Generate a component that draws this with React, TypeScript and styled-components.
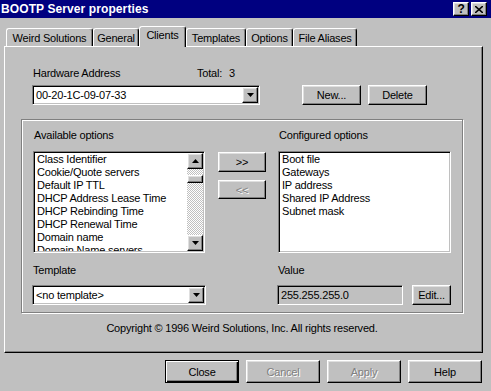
import React from 'react';
import styled, { createGlobalStyle, css } from 'styled-components';

const GlobalStyle = createGlobalStyle`
  html, body {
    margin: 0;
    padding: 0;
    background: #c0c0c0;
  }
  body {
    font-family: "Liberation Sans", Arial, sans-serif;
    font-size: 11px;
  }
  * {
    box-sizing: border-box;
  }
`;

const raised = css`
  border: 1px solid;
  border-color: #fff #000 #000 #fff;
  box-shadow: inset -1px -1px #808080, inset 1px 1px #dfdfdf;
  background: #c0c0c0;
`;

const sunken = css`
  border: 1px solid;
  border-color: #808080 #fff #fff #808080;
  box-shadow: inset 1px 1px #000, inset -1px -1px #c0c0c0;
`;

const available = [
  'Class Identifier',
  'Cookie/Quote servers',
  'Default IP TTL',
  'DHCP Address Lease Time',
  'DHCP Rebinding Time',
  'DHCP Renewal Time',
  'Domain name',
  'Domain Name servers',
];

const configured = ['Boot file', 'Gateways', 'IP address', 'Shared IP Address', 'Subnet mask'];

const tabs = [
  { label: 'Weird Solutions', w: 87 },
  { label: 'General', w: 46 },
  { label: 'Clients', w: 47, active: true },
  { label: 'Templates', w: 60 },
  { label: 'Options', w: 47 },
  { label: 'File Aliases', w: 64 },
];

const Arrow = ({ dir }: { dir: 'up' | 'down' }) => (
  <svg width="7" height="4" viewBox="0 0 7 4">
    {dir === 'up' ? <path d="M3.5 0 L7 4 L0 4 Z" fill="#000" /> : <path d="M0 0 L7 0 L3.5 4 Z" fill="#000" />}
  </svg>
);

const Combo = ({ value, width }: { value: string; width: number }) => (
  <ComboBox $w={width}>
    <ComboText>{value}</ComboText>
    <SmallBtn>
      <Arrow dir="down" />
    </SmallBtn>
  </ComboBox>
);

const App = () => {
  return (
    <>
      <GlobalStyle />
      <Window>
        <TitleBar>
          <Title>BOOTP Server properties</Title>
          <Caps>
            <CapButton>?</CapButton>
            <CapButton>
              <svg width="8" height="7" viewBox="0 0 8 7">
                <path d="M0 0 L8 7 M8 0 L0 7" stroke="#000" strokeWidth="1.6" />
              </svg>
            </CapButton>
          </Caps>
        </TitleBar>

        <Body>
          <TabStrip>
            {tabs.map((t) => (
              <Tab key={t.label} $w={t.w} $active={!!t.active}>
                {t.label}
              </Tab>
            ))}
          </TabStrip>

          <Panel>
            <TopRow>
              <FieldCol>
                <LabelRow>
                  <span>Hardware Address</span>
                  <Total>
                    <span>Total:</span>
                    <span>3</span>
                  </Total>
                </LabelRow>
                <Combo value="00-20-1C-09-07-33" width={228} />
              </FieldCol>
              <ButtonGroup>
                <Button $w={59} $h={20}>New...</Button>
                <Button $w={59} $h={20}>Delete</Button>
              </ButtonGroup>
            </TopRow>

            <GroupBox>
              <OptionsRow>
                <Column $w={172}>
                  <Label>Available options</Label>
                  <ListBox $w={172}>
                    <Items>
                      {available.map((o) => (
                        <Item key={o}>{o}</Item>
                      ))}
                    </Items>
                    <ScrollBar>
                      <SmallBtn>
                        <Arrow dir="up" />
                      </SmallBtn>
                      <Track>
                        <Thumb />
                      </Track>
                      <SmallBtn>
                        <Arrow dir="down" />
                      </SmallBtn>
                    </ScrollBar>
                  </ListBox>
                </Column>
                <MoveCol>
                  <Button $w={48} $h={20}>&gt;&gt;</Button>
                  <Button $w={48} $h={19} $disabled>
                    &lt;&lt;
                  </Button>
                </MoveCol>
                <Column $w={173} $ml={12}>
                  <Label>Configured options</Label>
                  <ListBox $w={173}>
                    <Items>
                      {configured.map((o) => (
                        <Item key={o}>{o}</Item>
                      ))}
                    </Items>
                  </ListBox>
                </Column>
              </OptionsRow>

              <BottomRow>
                <Column $w={174} $ml={-1}>
                  <Label>Template</Label>
                  <Combo value="<no template>" width={174} />
                </Column>
                <Column $w={175} $ml={71}>
                  <Label>Value</Label>
                  <ValueRow>
                    <ValueField>255.255.255.0</ValueField>
                    <Button $w={39} $h={20}>Edit...</Button>
                  </ValueRow>
                </Column>
              </BottomRow>
            </GroupBox>

            <Copyright>Copyright © 1996 Weird Solutions, Inc. All rights reserved.</Copyright>
          </Panel>

          <ButtonBar>
            <Button $w={74} $h={23} $default>Close</Button>
            <Button $w={74} $h={23} $disabled>Cancel</Button>
            <Button $w={74} $h={23} $disabled>Apply</Button>
            <Button $w={74} $h={23}>Help</Button>
          </ButtonBar>
        </Body>
      </Window>
    </>
  );
};

export default App;

const Window = styled.div`
  width: 491px;
  height: 391px;
  background: #c0c0c0;
  display: flex;
  flex-direction: column;
  overflow: hidden;
  color: #000;
  letter-spacing: -0.2px;
`;

const TitleBar = styled.div`
  height: 18px;
  background: #000080;
  color: #fff;
  display: flex;
  align-items: center;
  justify-content: space-between;
  padding: 0 4px 0 1px;
`;

const Title = styled.span`
  font-weight: bold;
  font-size: 12px;
  letter-spacing: 0.1px;
`;

const Caps = styled.div`
  display: flex;
  gap: 2px;
`;

const CapButton = styled.div`
  ${raised};
  width: 16px;
  height: 14px;
  display: flex;
  align-items: center;
  justify-content: center;
  font-weight: bold;
  font-size: 12px;
  color: #000;
`;

const Body = styled.div`
  padding: 8px 8px 0 4px;
  display: flex;
  flex-direction: column;
`;

const TabStrip = styled.div`
  display: flex;
  align-items: flex-end;
  height: 20px;
  padding-left: 2px;
  position: relative;
  z-index: 1;
`;

const Tab = styled.div<{ $w: number; $active: boolean }>`
  width: ${({ $w }) => $w}px;
  height: ${({ $active }) => ($active ? 21 : 18)}px;
  margin-bottom: ${({ $active }) => ($active ? -1 : 0)}px;
  background: #c0c0c0;
  border: 1px solid;
  border-bottom: none;
  border-color: #fff #000 #000 #fff;
  border-radius: 3px 3px 0 0;
  box-shadow: inset -1px 0 #808080;
  text-align: center;
  padding-top: ${({ $active }) => ($active ? 2 : 3)}px;
  white-space: nowrap;
`;

const Panel = styled.div`
  width: 479px;
  height: 307px;
  border: 1px solid;
  border-color: #fff #000 #000 #fff;
  box-shadow: inset -1px -1px #808080;
  padding: 20px 0 0 16px;
  display: flex;
  flex-direction: column;
`;

const TopRow = styled.div`
  display: flex;
  align-items: flex-end;
  padding-left: 11px;
`;

const FieldCol = styled.div`
  display: flex;
  flex-direction: column;
  gap: 5px;
`;

const LabelRow = styled.div`
  display: flex;
  justify-content: space-between;
  width: 203px;
  height: 13px;
  line-height: 13px;
  padding-left: 1px;
`;

const Total = styled.span`
  display: flex;
  gap: 7px;
`;

const ButtonGroup = styled.div`
  display: flex;
  gap: 7px;
  margin-left: 42px;
`;

const Button = styled.div<{ $w: number; $h: number; $disabled?: boolean; $default?: boolean }>`
  ${raised};
  width: ${({ $w }) => $w}px;
  height: ${({ $h }) => $h}px;
  display: flex;
  align-items: center;
  justify-content: center;
  color: ${({ $disabled }) => ($disabled ? '#808080' : '#000')};
  text-shadow: ${({ $disabled }) => ($disabled ? '1px 1px #fff' : 'none')};
  ${({ $default }) =>
    $default &&
    css`
      border: 1px solid #000;
      box-shadow: inset 1px 1px #fff, inset -1px -1px #000, inset -2px -2px #808080;
    `}
`;

const ComboBox = styled.div<{ $w: number }>`
  ${sunken};
  width: ${({ $w }) => $w}px;
  height: 20px;
  padding: 1px;
  background: #fff;
  display: flex;
  align-items: center;
`;

const ComboText = styled.span`
  flex: 1;
  padding-left: 2px;
  white-space: nowrap;
`;

const SmallBtn = styled.div`
  ${raised};
  width: 16px;
  height: 16px;
  flex-shrink: 0;
  display: flex;
  align-items: center;
  justify-content: center;
`;

const GroupBox = styled.div`
  width: 442px;
  height: 194px;
  margin-top: 14px;
  border: 1px solid #808080;
  box-shadow: inset 1px 1px #fff, 1px 1px #fff;
  padding: 9px 0 10px 11px;
  display: flex;
  flex-direction: column;
`;

const OptionsRow = styled.div`
  display: flex;
`;

const Column = styled.div<{ $w: number; $ml?: number }>`
  width: ${({ $w }) => $w}px;
  margin-left: ${({ $ml }) => $ml ?? 0}px;
  display: flex;
  flex-direction: column;
`;

const Label = styled.div`
  height: 13px;
  line-height: 13px;
  padding-left: 1px;
  margin-bottom: 8px;
  white-space: nowrap;
`;

const ListBox = styled.div<{ $w: number }>`
  ${sunken};
  width: ${({ $w }) => $w}px;
  height: 102px;
  padding: 1px;
  margin-top: 1px;
  background: #fff;
  display: flex;
  overflow: hidden;
`;

const Items = styled.div`
  flex: 1;
  padding: 0 2px;
  overflow: hidden;
`;

const Item = styled.div`
  height: 13px;
  line-height: 13px;
  white-space: nowrap;
`;

const ScrollBar = styled.div`
  width: 16px;
  display: flex;
  flex-direction: column;
`;

const Track = styled.div`
  flex: 1;
  background-color: #c0c0c0;
  background-image: conic-gradient(#fff 25%, #c0c0c0 0 50%, #fff 0 75%, #c0c0c0 0);
  background-size: 2px 2px;
`;

const Thumb = styled.div`
  ${raised};
  width: 16px;
  height: 8px;
  margin-top: 6px;
`;

const MoveCol = styled.div`
  width: 48px;
  margin-left: 13px;
  padding-top: 23px;
  display: flex;
  flex-direction: column;
  gap: 8px;
`;

const BottomRow = styled.div`
  display: flex;
  margin-top: 11px;
`;

const ValueRow = styled.div`
  display: flex;
  gap: 9px;
`;

const ValueField = styled.div`
  ${sunken};
  width: 126px;
  height: 20px;
  padding-left: 3px;
  display: flex;
  align-items: center;
  background: #c0c0c0;
`;

const Copyright = styled.div`
  width: 442px;
  margin-top: 9px;
  text-align: center;
  line-height: 13px;
`;

const ButtonBar = styled.div`
  display: flex;
  justify-content: flex-end;
  gap: 7px;
  margin-top: 7px;
  padding-right: 1px;
`;
